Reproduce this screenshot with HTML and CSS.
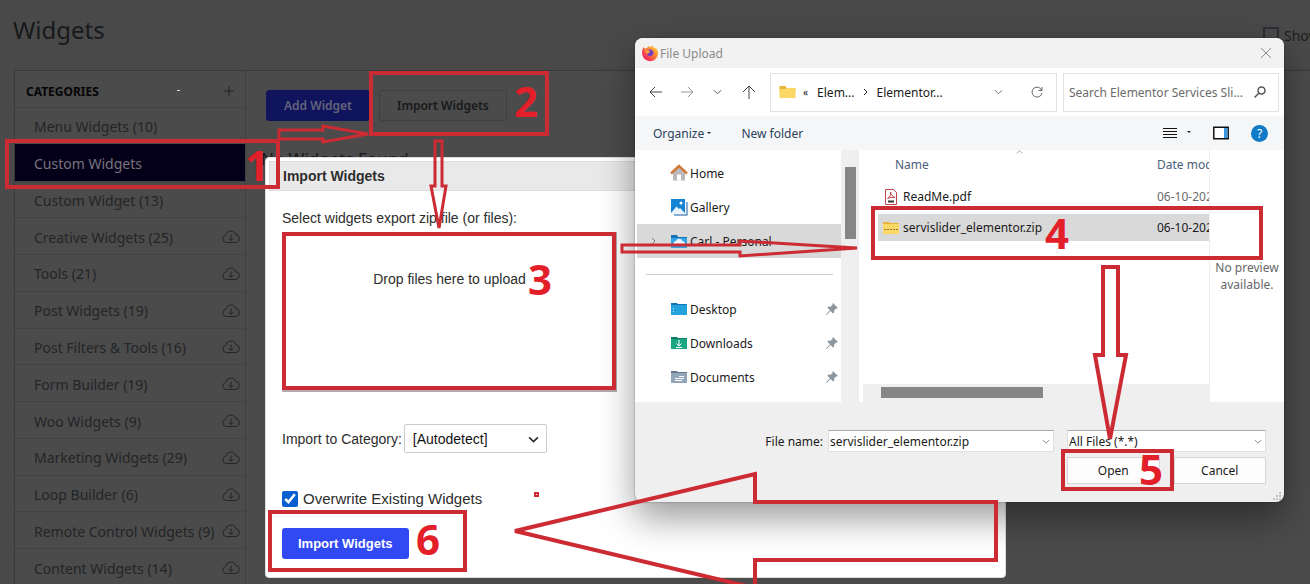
FILE: index.html
```
<!DOCTYPE html>
<html lang="en">
<head>
  <meta charset="UTF-8">
  <meta name="viewport" content="width=device-width, initial-scale=1.0">
  <title>Widgets</title>
  <link rel="stylesheet" href="styles.css">
</head>
<body>
  <!-- Shared icons -->
  <svg class="sprite" aria-hidden="true">
    <symbol id="cloud" viewBox="0 0 18 16">
      <path d="M5 13.5H4.2a3.6 3.6 0 0 1-.5-7.1A5.2 5.2 0 0 1 13.8 5.600a4 4 0 0 1 .3 7.900H5zM9 5.500v6M6.700 9.200 9 11.500l2.300-2.300" />
    </symbol>
    <symbol id="chevron" viewBox="0 0 10 6">
      <path d="M1 1l4 4 4-4" />
    </symbol>
    <symbol id="pin" viewBox="0 0 12 12">
      <path d="M7 0l5 5-1.200.6-.7-.2-2 2 .1 2.200-1.200 1L4.600 8 .8 11.800 0 12l.3-.9L4 7.300 1.400 4.800l1-1.200 2.200.2 2-2-.2-.8z" />
    </symbol>
  </svg>

  <header class="page-header">
    <h1>Widgets</h1>
    <label class="show-option"><input type="checkbox">Show</label>
  </header>

  <div class="workspace">
    <aside class="categories">
      <div class="categories-head">
        <h2>CATEGORIES</h2>
        <button class="add-category" aria-label="Add category">
          <svg viewBox="0 0 10 10"><path d="M5 0v10M0 5h10" /></svg>
        </button>
      </div>
      <ul class="category-list">
        <li><a href="#">Menu Widgets (10)</a></li>
        <li class="active"><a href="#">Custom Widgets</a></li>
        <li><a href="#">Custom Widget (13)</a></li>
        <li><a href="#">Creative Widgets (25)</a><svg><use href="#cloud" /></svg></li>
        <li><a href="#">Tools (21)</a><svg><use href="#cloud" /></svg></li>
        <li><a href="#">Post Widgets (19)</a><svg><use href="#cloud" /></svg></li>
        <li><a href="#">Post Filters &amp; Tools (16)</a><svg><use href="#cloud" /></svg></li>
        <li><a href="#">Form Builder (19)</a><svg><use href="#cloud" /></svg></li>
        <li><a href="#">Woo Widgets (9)</a><svg><use href="#cloud" /></svg></li>
        <li><a href="#">Marketing Widgets (29)</a><svg><use href="#cloud" /></svg></li>
        <li><a href="#">Loop Builder (6)</a><svg><use href="#cloud" /></svg></li>
        <li><a href="#">Remote Control Widgets (9)</a><svg><use href="#cloud" /></svg></li>
        <li><a href="#">Content Widgets (14)</a><svg><use href="#cloud" /></svg></li>
      </ul>
    </aside>
    <main class="widgets-area">
      <div class="widget-actions">
        <button class="btn-add">Add Widget</button>
        <button class="btn-import">Import Widgets</button>
      </div>
      <p class="empty">No Widgets Found</p>
    </main>
  </div>

  <!-- Import dialog -->
  <section class="import-modal">
    <h2>Import Widgets</h2>
    <form class="import-form">
      <p>Select widgets export zip file (or files):</p>
      <div class="dropzone">Drop files here to upload</div>
      <div class="category-field">
        <label for="category">Import to Category:</label>
        <div class="select-wrap">
          <select id="category"><option>[Autodetect]</option></select>
          <svg><use href="#chevron" /></svg>
        </div>
      </div>
      <label class="overwrite"><input type="checkbox" checked>Overwrite Existing Widgets</label>
      <button type="button" class="btn-submit">Import Widgets</button>
    </form>
  </section>

  <!-- File upload window -->
  <section class="file-window">
    <div class="title-bar">
      <svg class="firefox" viewBox="0 0 18 18">
        <defs>
          <linearGradient id="fire" x1="1" y1="0" x2="0" y2="1">
            <stop offset="0" stop-color="#ffe045" /><stop offset=".4" stop-color="#ff8a30" /><stop offset=".75" stop-color="#f7355a" /><stop offset="1" stop-color="#e3208a" />
          </linearGradient>
        </defs>
        <path fill="url(#fire)" d="M2.500 3.200 4 4.800c.6-.5 1.400-.8 2-.8C7 2.500 8 2.200 8.600 2c0 .8.4 1.300 1.100 1.600L11 1c.2 1.500 1.600 2.300 2.600 3.400l.8-1c2 1.800 3 4.300 2.600 7A8 8 0 0 1 1.300 11C.8 8 1 5.400 2.500 3.200z" />
        <path fill="#7640bd" d="M6 6.400c1.500-1.200 5-1.200 6.200.8 1 2.600-.6 5-3.200 5S5.400 10 5.600 8.600c1 .6 2 .5 2.600-.4C7.200 8 6.500 7.400 6 6.400z" />
        <path fill="#ff9a36" d="M4 6c2-.5 4 .2 5 1.800-.8 1.400-2.600 1.200-2.600 2.400C4.800 9.400 3.800 8 4 6z" />
      </svg>
      <span>File Upload</span>
      <button aria-label="Close"><svg viewBox="0 0 10 10"><path d="M0 0l10 10M10 0L0 10" /></svg></button>
    </div>

    <div class="nav-bar">
      <div class="nav-buttons">
        <button aria-label="Back"><svg viewBox="0 0 14 14"><path d="M13 7H1.500M6 2L1 7l5 5" /></svg></button>
        <button class="faded" aria-label="Forward"><svg viewBox="0 0 14 14"><path d="M1 7h11.500M8 2l5 5-5 5" /></svg></button>
        <button aria-label="Recent"><svg class="small"><use href="#chevron" /></svg></button>
        <button aria-label="Up"><svg viewBox="0 0 14 14"><path d="M7 14V1M1 7l6-6 6 6" /></svg></button>
      </div>
      <div class="address">
        <svg class="folder" viewBox="0 0 16 14"><path fill="#e8b339" d="M0 1h6l1 2h9v4H0z" /><path fill="#fbd766" d="M0 4h6l1-1h9v10H0z" /></svg>
        <span class="crumb-more">«</span>
        <span>Elem...</span>
        <svg class="crumb-arrow" viewBox="0 0 4 8"><path d="M0 1l3 3-3 3" /></svg>
        <span class="crumb-last">Elementor...</span>
        <svg class="small"><use href="#chevron" /></svg>
        <svg class="refresh" viewBox="0 0 12 12"><path d="M10.800 4.500A5 5 0 1 0 11 7M11 1v3.500H7.500" /></svg>
      </div>
      <div class="search">
        <input type="text" placeholder="Search Elementor Services Sli..." aria-label="Search">
        <svg viewBox="0 0 12 12"><circle cx="7.500" cy="4.500" r="3.500" /><path d="M5 7l-4.500 4.500" /></svg>
      </div>
    </div>

    <div class="tool-bar">
      <button>Organize <span class="caret"></span></button>
      <button>New folder</button>
      <div class="view-tools">
        <svg class="list-icon" viewBox="0 0 14 12"><path d="M0 1.500h14M0 4.500h14M0 7.500h14M0 10.500h14" /></svg>
        <span class="caret"></span>
        <svg class="pane-icon" viewBox="0 0 16 13"><path fill="#fff" stroke="#111" stroke-width="1.500" d="M.8.8h14.400v11.400H.8z" /><path fill="#3a96dd" d="M11 1.500h3.500v10H11z" /></svg>
        <span class="help">?</span>
      </div>
    </div>

    <div class="explorer">
      <nav class="places">
        <a href="#">
          <svg viewBox="0 0 18 18"><path fill="#b9b9bd" d="M3 8l6-5 6 5v8.500H3z" /><path fill="#fff" d="M7 10.500h4v6H7z" /><path fill="none" stroke="#d07a3a" stroke-width="2.400" d="M1 9.500l8-7.500 8 7.500" /></svg>
          Home
        </a>
        <a href="#">
          <svg viewBox="0 0 18 18"><path fill="#1a5ea8" d="M4 4h13.500v13.500H4z" /><path fill="#eef6fc" d="M2 2h14.500v14.500H2z" /><path fill="#1682d4" d="M1 1h14v14H1z" /><path fill="#e8f5ff" d="M1 15l5.500-6.500L9 11l1-1 5 5z" /><circle cx="11" cy="5" r="1.500" fill="#fff" /></svg>
          Gallery
        </a>
        <a href="#" class="selected">
          <svg class="expand" viewBox="0 0 4 8"><path d="M0 1l3 3-3 3" /></svg>
          <svg viewBox="0 0 18 18"><path fill="#1573b8" d="M1 3h6l1 2h9v11H1z" /><path fill="#35a4e6" d="M1 6h16v10H1z" /><path fill="#e9f4fc" d="M6 14a2.500 2.500 0 0 1 0-5 3.500 3.500 0 0 1 6.500 0 2.500 2.500 0 0 1 0 5z" /></svg>
          Carl - Personal
        </a>
        <hr>
        <a href="#">
          <svg viewBox="0 0 18 18"><path fill="#1573b8" d="M1 3h6l1 1h9v3H1z" /><path fill="#23a3dc" d="M1 5h16v10H1z" /><path fill="#bfe6fa" d="M3 8h1v1H3zM3 11h1v1H3z" /></svg>
          Desktop
          <svg class="pin"><use href="#pin" /></svg>
        </a>
        <a href="#">
          <svg viewBox="0 0 18 18"><path fill="#0d7a63" d="M1 3h6l1 1h9v3H1z" /><path fill="#1ba583" d="M1 5h16v10H1z" /><path fill="none" stroke="#fff" d="M9 6v6M6.500 9.500 9 12l2.500-2.500M6 13.500h6" /></svg>
          Downloads
          <svg class="pin"><use href="#pin" /></svg>
        </a>
        <a href="#">
          <svg viewBox="0 0 18 18"><path fill="#66788c" d="M1 3h6l1 1h9v3H1z" /><path fill="#93a5b8" d="M1 5h16v10H1z" /><path fill="none" stroke="#fff" d="M9 8.500h5M5 10.500h9M5 12.500h7" /></svg>
          Documents
          <svg class="pin"><use href="#pin" /></svg>
        </a>
      </nav>
      <div class="v-scroll"><div class="v-thumb"></div></div>
      <div class="files">
        <table>
          <thead>
            <tr><th class="icon-cell"></th><th>Name</th><th class="date">Date modified</th></tr>
          </thead>
          <tbody>
            <tr>
              <td class="icon-cell"><svg viewBox="0 0 16 16"><path fill="#fff" stroke="#c4454b" d="M2.500.5h8l3 3v12h-11z" /><path fill="none" stroke="#c4454b" d="M4.500 9.500C7 8 8 5.500 7.500 3c.5 3 2 4.500 4.500 5.500-3-.3-5 0-7.500 1z" /><path stroke="#333" stroke-width="2" d="M5 12.500h6" /></svg></td>
              <td>ReadMe.pdf</td><td class="date">06-10-2025</td>
            </tr>
            <tr class="picked">
              <td class="icon-cell"><svg viewBox="0 0 16 16"><path fill="#e8b339" d="M0 2h6l1 1h9v4H0z" /><path fill="#fbd766" d="M0 4h16v10H0z" /><path fill="none" stroke="#8b7b45" stroke-dasharray="2 1" d="M1 9.500h14" /></svg></td>
              <td>servislider_elementor.zip</td><td class="date">06-10-2025</td>
            </tr>
          </tbody>
        </table>
        <svg class="sort-mark"><use href="#chevron" /></svg>
        <div class="h-scroll"><div class="h-thumb"></div></div>
      </div>
      <div class="preview">No preview available.</div>
    </div>

    <form class="window-footer">
      <label for="filename">File name:</label>
      <div class="combo">
        <input type="text" id="filename" value="servislider_elementor.zip">
        <svg><use href="#chevron" /></svg>
      </div>
      <div class="combo">
        <select aria-label="File type"><option>All Files (*.*)</option></select>
        <svg><use href="#chevron" /></svg>
      </div>
      <div class="footer-buttons">
        <button type="button">Open</button>
        <button type="button">Cancel</button>
      </div>
    </form>
    <svg class="grip" viewBox="0 0 9 9"><path d="M7 0h2v2H7zM7 3.500h2v2H7zM7 7h2v2H7zM3.500 3.500h2v2h-2zM3.500 7h2v2h-2zM0 7h2v2H0z" /></svg>
  </section>

  <!-- Step markers drawn over everything -->
  <svg class="steps" width="1310" height="600">
    <g class="boxes">
      <rect x="7" y="141" width="271" height="46" />
      <rect x="371" y="73" width="176" height="61" />
      <rect x="284" y="234" width="330" height="154" />
      <rect x="873" y="208" width="388" height="50" />
      <rect x="1063" y="451" width="109" height="38" />
      <rect x="270" y="512" width="195" height="58" />
      <path d="M1103 267h15v88h8l-16 84-15-84h8z" />
      <path d="M515 531 755 474V502H996V560H755V588z" />
    </g>
    <g class="arrows">
      <path d="M279 130h44v-4l45 8-45 8v-3h-44z" />
      <path d="M435 141h7v45h4l-7 42-8-42h4z" />
      <path d="M622 245h118v-4l117 7-117 8v-4H622z" />
      <path class="square" d="M535 493h3v3h-3z" />
    </g>
    <path class="dash" d="M177 90.500h3" />
    <g class="numbers">
      <text x="245" y="181">1</text>
      <text x="514" y="117">2</text>
      <text x="528" y="295">3</text>
      <text x="1045" y="249">4</text>
      <text x="1139" y="485">5</text>
      <text x="416" y="555">6</text>
    </g>
  </svg>
</body>
</html>
```
FILE: styles.css
```
* {
  box-sizing: border-box;
  margin: 0;
  padding: 0;
}

body {
  height: 100vh;
  overflow: hidden;
  position: relative;
  display: flex;
  flex-direction: column;
  background: #494949;
  color: #222;
  font-family: "Noto Sans", sans-serif;
  font-size: 12px;
}

button,
input,
select {
  font: inherit;
  color: inherit;
}

a {
  color: inherit;
  text-decoration: none;
}

svg {
  fill: none;
  stroke: currentColor;
  flex: none;
}

.sprite {
  position: absolute;
  width: 0;
  height: 0;
}

/* Page behind the dialogs */
.page-header {
  display: flex;
  justify-content: space-between;
  height: 70px;
  padding-left: 13px;
}

.page-header h1 {
  margin-top: 12px;
  font-size: 24px;
  line-height: 36px;
  font-weight: 400;
  color: #17191c;
}

.show-option {
  display: flex;
  align-items: center;
  gap: 5px;
  width: 47px;
  height: 70px;
  overflow: hidden;
  font-size: 14px;
  color: #1d1f22;
}

.show-option input {
  appearance: none;
  flex: none;
  width: 16px;
  height: 16px;
  border: 2px solid #2c2e33;
}

.workspace {
  flex: 1;
  display: flex;
  margin-left: 14px;
  border-top: 1px solid #393a3b;
  border-left: 1px solid #393a3b;
  background: #4b4b4b;
}

.categories {
  width: 231px;
  border-right: 1px solid #3f4041;
}

.categories-head {
  display: flex;
  align-items: center;
  justify-content: space-between;
  height: 36px;
  padding: 4px 11px 0;
}

.categories-head h2 {
  font-size: 12px;
  color: #050505;
}

.add-category {
  border: none;
  background: none;
  color: #222;
}

.add-category svg {
  display: block;
  width: 10px;
  height: 10px;
}

.category-list {
  display: grid;
  grid-auto-rows: 1fr;
  height: 478px;
  list-style: none;
  font-size: 14px;
  color: #232527;
}

.category-list li {
  display: flex;
  align-items: center;
  justify-content: space-between;
  padding: 2px 5px 0 19px;
  border-top: 1px solid #424344;
  white-space: nowrap;
}

.category-list svg {
  width: 18px;
  height: 16px;
}

.category-list .active {
  background: #05001a;
  border-color: #05001a;
  color: #77757d;
}

.widgets-area {
  flex: 1;
  padding: 19px 20px;
}

.widget-actions {
  display: flex;
  gap: 9px;
}

.widget-actions button {
  height: 31px;
  padding: 0 17px;
  border: 1px solid #3f4041;
  border-radius: 3px;
  font-weight: 600;
  background: none;
  color: #17191c;
}

.widget-actions .btn-add {
  background: #10145c;
  border-color: #10145c;
  color: #62647c;
}

.empty {
  margin: 24px 0 0 -5px;
  font-size: 17px;
  line-height: 28px;
  color: #17191c;
}

/* Import dialog */
.import-modal {
  position: absolute;
  left: 265px;
  top: 157px;
  width: 741px;
  padding: 3px;
  background: #fff;
  border: 1px solid #ddd;
  border-radius: 4px;
  font-family: "Liberation Sans", Arial, sans-serif;
  font-size: 14px;
  color: #2d2d2d;
}

.import-modal h2 {
  height: 30px;
  padding-left: 13px;
  background: #e9e9e9;
  border: 1px solid #ddd;
  font-size: 14px;
  line-height: 28px;
}

.import-form {
  padding: 17px 13px 15px;
}

.import-form p {
  line-height: 20px;
}

.dropzone {
  width: 335px;
  height: 160px;
  margin-top: 4px;
  padding: 35px 0 0;
  border: 2px solid #b3a9af;
  line-height: 20px;
  text-align: center;
}

.category-field {
  display: flex;
  align-items: center;
  gap: 2px;
  margin-top: 32px;
}

.select-wrap,
.combo,
.search {
  position: relative;
}

.select-wrap select {
  appearance: none;
  width: 143px;
  height: 29px;
  padding-left: 8px;
  border: 1px solid #ccc;
  border-radius: 2px;
  background: #fff;
  color: #111;
}

.select-wrap svg {
  position: absolute;
  right: 8px;
  top: 12px;
  width: 11px;
  height: 7px;
  stroke-width: 1.5;
}

.overwrite {
  display: flex;
  align-items: center;
  gap: 5px;
  margin-top: 37px;
  font-size: 15px;
  line-height: 18px;
}

.overwrite input {
  width: 16px;
  height: 16px;
  accent-color: #0a5fd0;
}

.btn-submit {
  display: block;
  height: 31px;
  margin-top: 20px;
  padding: 0 16px;
  border: none;
  border-radius: 3px;
  background: #3149f2;
  color: #fff;
  font-size: 13px;
  font-weight: 700;
}

/* File upload window */
.file-window {
  position: absolute;
  left: 635px;
  top: 38px;
  width: 649px;
  overflow: hidden;
  background: #efefef;
  border-radius: 8px;
  box-shadow: 0 16px 36px rgba(0, 0, 0, 0.4), 0 0 2px rgba(0, 0, 0, 0.4);
  color: #1a1a1a;
}

.title-bar {
  display: flex;
  align-items: center;
  gap: 1px;
  height: 30px;
  padding: 0 13px 0 6px;
  background: #f2f2f2;
  color: #8a8a8a;
}

.title-bar button {
  margin-left: auto;
  border: none;
  background: none;
}

.title-bar button svg {
  display: block;
  width: 10px;
  height: 10px;
}

.title-bar .firefox {
  width: 18px;
  height: 18px;
  stroke: none;
}

.nav-bar {
  display: flex;
  align-items: center;
  gap: 6px;
  height: 48px;
  padding: 0 5px 0 6px;
  background: #fff;
}

.nav-buttons {
  display: flex;
  width: 123px;
}

.nav-buttons button {
  flex: 1;
  display: flex;
  align-items: center;
  justify-content: center;
  border: none;
  background: none;
  color: #444;
}

.nav-buttons .faded {
  color: #999;
}

.nav-buttons svg {
  width: 14px;
  height: 14px;
}

.nav-bar .small {
  width: 9px;
  height: 6px;
}

.address,
.search {
  height: 39px;
  border: 1px solid #e2e2e2;
  display: flex;
  align-items: center;
}

.address {
  flex: 1;
  padding: 0 13px 0 8px;
}

.address .folder {
  width: 17px;
  height: 14px;
  stroke: none;
}

.crumb-more {
  margin: 0 9px 0 7px;
  font-size: 10px;
}

.crumb-arrow {
  width: 4px;
  height: 8px;
  margin: 0 9px;
}

.crumb-last {
  flex: 1;
}

.address .small,
.refresh {
  color: #666;
}

.refresh {
  width: 12px;
  height: 12px;
  margin-left: 28px;
}

.search {
  width: 216px;
  padding: 0 12px 0 5px;
  color: #555;
}

.search input {
  flex: 1;
  min-width: 0;
  border: none;
  outline: none;
  background: none;
}

.search input::placeholder {
  color: #6b6b6b;
}

.search svg {
  width: 12px;
  height: 12px;
  stroke-width: 1.5;
}

.tool-bar {
  display: flex;
  align-items: center;
  gap: 30px;
  height: 34px;
  padding: 0 16px 0 18px;
  background: #f4f6f8;
  color: #2a4158;
}

.tool-bar button {
  border: none;
  background: none;
}

.caret {
  display: inline-block;
  border: 2px solid transparent;
  border-top-color: #222;
  vertical-align: middle;
}

.view-tools {
  display: flex;
  align-items: center;
  margin-left: auto;
}

.view-tools .list-icon {
  width: 14px;
  height: 12px;
  margin-right: 10px;
  color: #111;
}

.view-tools .pane-icon {
  width: 16px;
  height: 14px;
  margin: 0 22px;
  stroke: none;
}

.help {
  width: 17px;
  height: 17px;
  border-radius: 50%;
  background: #0f7bc8;
  color: #fff;
  line-height: 17px;
  text-align: center;
}

.explorer {
  display: flex;
  height: 252px;
}

.places {
  width: 206px;
  padding: 6px 0 0 2px;
  background: #fff;
}

.places a {
  display: flex;
  align-items: center;
  gap: 2px;
  height: 34px;
  padding: 0 3px 0 33px;
  position: relative;
}

.places a svg {
  width: 18px;
  height: 18px;
  stroke: none;
}

.places .selected {
  background: #d9d9d9;
}

.places a .expand {
  position: absolute;
  left: 15px;
  width: 4px;
  height: 8px;
  stroke: #777;
}

.places a .pin {
  width: 12px;
  height: 12px;
  margin-left: auto;
  fill: #8d979f;
}

.places hr {
  height: 1px;
  margin: 16px 8px 17px 9px;
  border: none;
  background: #ccc;
}

.v-scroll {
  width: 22px;
  padding: 17px 0 0 4px;
  border-right: 4px solid #fff;
}

.v-thumb {
  width: 11px;
  height: 72px;
  background: #868686;
}

.files {
  flex: 1;
  min-width: 0;
  display: flex;
  flex-direction: column;
  justify-content: space-between;
  position: relative;
  overflow: hidden;
  background: #fff;
}

.files table {
  width: 500px;
  margin: -5px 0 0 15px;
  table-layout: fixed;
  border-spacing: 0 4px;
}

.files th {
  height: 30px;
  font-weight: 400;
  text-align: left;
  color: #4c607a;
}

.files td {
  height: 27px;
}

.files .icon-cell {
  width: 25px;
  padding-left: 5px;
}

.files th:nth-child(2) {
  text-indent: -8px;
}

.files .date {
  width: 221px;
}

.files td.date {
  color: #6b6b6b;
}

.files .icon-cell svg {
  display: block;
  width: 16px;
  height: 16px;
  stroke: none;
}

.files .picked td {
  background: #d9d9d9;
  color: #1a1a1a;
}

.sort-mark {
  position: absolute;
  left: 153px;
  top: 0;
  width: 7px;
  height: 4px;
  color: #777;
  rotate: 180deg;
}

.h-scroll {
  height: 18px;
  padding: 3px 0 0 18px;
  background: #efefef;
}

.h-thumb {
  width: 162px;
  height: 11px;
  background: #868686;
}

.preview {
  display: flex;
  align-items: center;
  justify-content: center;
  width: 75px;
  background: #fff;
  border-left: 1px solid #eee;
  color: #666;
  line-height: 17px;
  text-align: center;
}

.window-footer {
  display: grid;
  grid-template-columns: 1fr 226px 199px;
  gap: 5px 13px;
  align-items: center;
  padding: 28px 18px 18px;
}

.window-footer label {
  margin-right: -8px;
  text-align: right;
}

.combo input,
.combo select {
  appearance: none;
  display: block;
  width: 100%;
  height: 22px;
  padding: 0 1px;
  border: 1px solid #e0e0e0;
  border-top-color: #aaa;
  background: #fff;
}

.combo svg {
  position: absolute;
  right: 4px;
  top: 9px;
  width: 8px;
  height: 5px;
  color: #777;
}

.footer-buttons {
  grid-column: 3;
  display: grid;
  grid-template-columns: 1fr 1fr;
  gap: 14px;
}

.footer-buttons button {
  height: 27px;
  border: 1px solid #d6d6d6;
  background: #fdfdfd;
}

.grip {
  position: absolute;
  right: 3px;
  bottom: 2px;
  width: 8px;
  height: 8px;
  fill: #b5b5b5;
  stroke: none;
}

/* Step markers */
.steps {
  position: absolute;
  left: 0;
  top: 0;
  pointer-events: none;
  stroke: #cc2b33;
}

.boxes {
  stroke-width: 4;
}

.arrows {
  stroke-width: 3;
}

.arrows .square {
  stroke-width: 2;
}

.dash {
  stroke: #ddd;
}

.numbers {
  fill: #e3202a;
  stroke: none;
  font-size: 42px;
  font-weight: 700;
}
```
